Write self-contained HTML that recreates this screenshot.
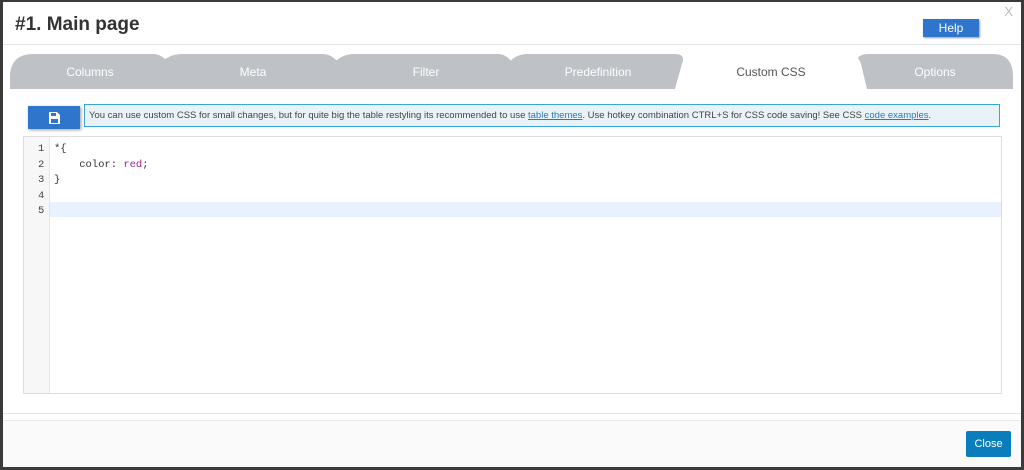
<!DOCTYPE html>
<html><head><style>
body{margin:0;width:1024px;height:470px;background:#3a3a3a;font-family:"Liberation Sans",sans-serif;position:relative;overflow:hidden}
.m{position:absolute;left:3px;top:2px;width:1018px;height:464px;background:#fff}
.t{position:absolute;left:12px;top:12px;font-size:19px;font-weight:bold;color:#333}
.x{position:absolute;right:8px;top:2px;color:#bbb;font-size:13px}
.help{position:absolute;left:920px;top:17px;width:56px;height:18px;background:#2f75cc;color:#fff;font-size:12px;text-align:center;line-height:18px;box-shadow:1px 1px 2px rgba(0,0,0,.4)}
.hl{position:absolute;left:0;top:42px;width:1018px;height:1px;background:#e3e3e3}
svg{position:absolute;left:0;top:0}
.tab{position:absolute;top:63px;font-size:12px;color:#fff;text-align:center}
.save{position:absolute;left:25px;top:104px;width:52px;height:23px;background:#2f75cc;box-shadow:1px 1px 3px rgba(0,0,0,.4)}
.info{position:absolute;left:81px;top:102px;width:910px;height:21px;border:1px solid #3aa6d8;background:#e9f3f7;font-size:9.5px;color:#444;line-height:21px;padding-left:4px}
.info u{color:#2a7ab0}
.ed{position:absolute;left:20px;top:134px;width:977px;height:256px;border:1px solid #ddd;background:#fff}
.gut{position:absolute;left:0;top:0;width:25px;height:256px;background:#f7f7f7;border-right:1px solid #e5e5e5}
.ln{position:absolute;font-family:"Liberation Mono",monospace;font-size:10.5px;color:#444}
.act{position:absolute;left:26px;top:65px;width:951px;height:15px;background:#e8f2fe}
.f1{position:absolute;left:0;top:411px;width:1018px;height:1px;background:#e3e3e3}
.ft{position:absolute;left:0;top:418px;width:1018px;height:46px;background:#fafafa;border-top:1px solid #e8e8e8}
.close{position:absolute;left:963px;top:429px;width:45px;height:26px;background:#0a7dbd;color:#fff;font-size:11px;text-align:center;line-height:26px;border-radius:2px}
</style></head><body>
<div class="m">
<div class="t">#1. Main page</div><div class="x">X</div>
<div class="help">Help</div>
<div class="hl"></div>
<svg width="1018" height="100">
<g fill="#bec2c6">
<path d="M7,87 L7,72 Q9,52 30,52 L150,52 Q158,52 165,60 L170,66 L170,87Z"/>
<path d="M157,87 L157,62 Q165,52 180,52 L320,52 Q328,52 335,60 L340,66 L340,87Z"/>
<path d="M330,87 L330,62 Q338,52 352,52 L495,52 Q503,52 509,60 L514,66 L514,87Z"/>
<path d="M505,87 L505,62 Q512,52 525,52 L672,52 Q683,52 679,62 L672,87Z"/>
<path d="M860,87 L855,62 Q852,52 866,52 L990,52 Q1010,52 1010,75 L1010,87Z"/>
</g>
<path fill="#fff" d="M672,87 L679,62 Q683,52 696,52 L844,52 Q855,52 858,62 L864,87Z"/>
</svg>
<div class="tab" style="left:7px;width:160px">Columns</div>
<div class="tab" style="left:165px;width:170px">Meta</div>
<div class="tab" style="left:338px;width:170px">Filter</div>
<div class="tab" style="left:510px;width:170px">Predefinition</div>
<div class="tab" style="left:683px;width:170px;color:#555">Custom CSS</div>
<div class="tab" style="left:857px;width:150px">Options</div>
<div class="save"><svg width="52" height="23" viewBox="0 0 52 23"><path d="M21,6 h8 l3,3 v9 h-11z" fill="#fff"/><rect x="23" y="7" width="5" height="3" fill="#2f75cc"/><rect x="23" y="13" width="7" height="4" fill="#2f75cc"/></svg></div>
<div class="info">You can use custom CSS for small changes, but for quite big the table restyling its recommended to use <u>table themes</u>. Use hotkey combination CTRL+S for CSS code saving! See CSS <u>code examples</u>.</div>
<div class="ed"><div class="gut"></div><div class="act"></div>
<div class="ln" style="left:14px;top:5px;line-height:15.5px">1<br>2<br>3<br>4<br>5</div>
<div class="ln" style="left:30px;top:5px;line-height:15.5px;color:#333">*{<br>&nbsp;&nbsp;&nbsp;&nbsp;color: <span style="color:#a020a0">red</span>;<br>}</div>
</div>
<div class="f1"></div>
<div class="ft"></div>
<div class="close">Close</div>
</div>
</body></html>
